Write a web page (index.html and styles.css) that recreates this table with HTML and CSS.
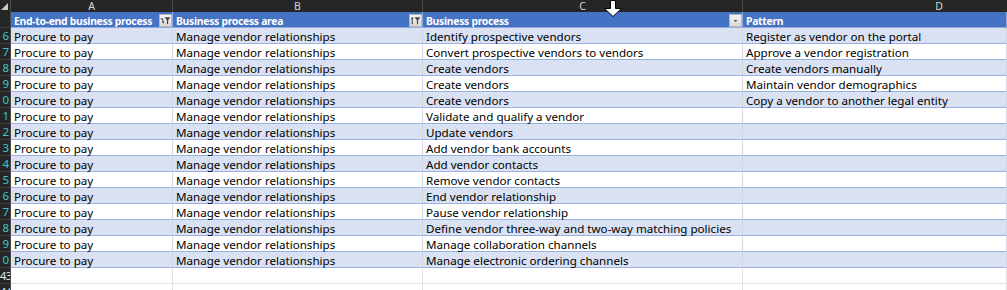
FILE: index.html
```html
<!DOCTYPE html>
<html>
<head>
<meta charset="utf-8">
<link rel="stylesheet" href="styles.css">
</head>
<body>
<div class="sheet">
  <div class="colhead corner"><span class="corner-tri"></span></div>
  <div class="colhead">A</div>
  <div class="colhead">B</div>
  <div class="colhead">C</div>
  <div class="colhead last">D</div>

  <div class="rowhead"></div>
  <div class="th"><span>End-to-end business process</span>
    <span class="fbtn"><svg viewBox="0 0 13 13" width="13" height="13"><path d="M1.8 4.6 Q4.2 4.2 4.2 8.6" fill="none" stroke="#444" stroke-width="1.1"/><path d="M3 8 L4.2 9.8 L5.4 8 Z" fill="#444"/><path d="M5.6 3.2 H11.4 L9.1 6.2 V9.8 L7.9 10.4 V6.2 Z" fill="#444"/></svg></span></div>
  <div class="th"><span>Business process area</span>
    <span class="fbtn"><svg viewBox="0 0 13 13" width="13" height="13"><path d="M3.2 10.2 V3.8" stroke="#444" stroke-width="1.1"/><path d="M1.8 5 L3.2 3 L4.6 5 Z" fill="#444"/><path d="M5.6 3.2 H11.4 L9.1 6.2 V9.8 L7.9 10.4 V6.2 Z" fill="#444"/></svg></span></div>
  <div class="th"><span>Business process</span>
    <span class="fbtn"><svg viewBox="0 0 13 13" width="13" height="13"><path d="M4.5 6 H8.5 L6.5 8 Z" fill="#555"/></svg></span></div>
  <div class="th"><span>Pattern</span></div>

  <div class="rowhead">6</div><div class="td">Procure to pay</div><div class="td">Manage vendor relationships</div><div class="td">Identify prospective vendors</div><div class="td">Register as vendor on the portal</div>
  <div class="rowhead">7</div><div class="td w">Procure to pay</div><div class="td w">Manage vendor relationships</div><div class="td w">Convert prospective vendors to vendors</div><div class="td w">Approve a vendor registration</div>
  <div class="rowhead">8</div><div class="td">Procure to pay</div><div class="td">Manage vendor relationships</div><div class="td">Create vendors</div><div class="td">Create vendors manually</div>
  <div class="rowhead">9</div><div class="td w">Procure to pay</div><div class="td w">Manage vendor relationships</div><div class="td w">Create vendors</div><div class="td w">Maintain vendor demographics</div>
  <div class="rowhead">0</div><div class="td">Procure to pay</div><div class="td">Manage vendor relationships</div><div class="td">Create vendors</div><div class="td">Copy a vendor to another legal entity</div>
  <div class="rowhead">1</div><div class="td w">Procure to pay</div><div class="td w">Manage vendor relationships</div><div class="td w">Validate and qualify a vendor</div><div class="td w"></div>
  <div class="rowhead">2</div><div class="td">Procure to pay</div><div class="td">Manage vendor relationships</div><div class="td">Update vendors</div><div class="td"></div>
  <div class="rowhead">3</div><div class="td w">Procure to pay</div><div class="td w">Manage vendor relationships</div><div class="td w">Add vendor bank accounts</div><div class="td w"></div>
  <div class="rowhead">4</div><div class="td">Procure to pay</div><div class="td">Manage vendor relationships</div><div class="td">Add vendor contacts</div><div class="td"></div>
  <div class="rowhead">5</div><div class="td w">Procure to pay</div><div class="td w">Manage vendor relationships</div><div class="td w">Remove vendor contacts</div><div class="td w"></div>
  <div class="rowhead">6</div><div class="td">Procure to pay</div><div class="td">Manage vendor relationships</div><div class="td">End vendor relationship</div><div class="td"></div>
  <div class="rowhead">7</div><div class="td w">Procure to pay</div><div class="td w">Manage vendor relationships</div><div class="td w">Pause vendor relationship</div><div class="td w"></div>
  <div class="rowhead">8</div><div class="td">Procure to pay</div><div class="td">Manage vendor relationships</div><div class="td">Define vendor three-way and two-way matching policies</div><div class="td"></div>
  <div class="rowhead">9</div><div class="td w">Procure to pay</div><div class="td w">Manage vendor relationships</div><div class="td w">Manage collaboration channels</div><div class="td w"></div>
  <div class="rowhead">0</div><div class="td">Procure to pay</div><div class="td">Manage vendor relationships</div><div class="td">Manage electronic ordering channels</div><div class="td"></div>

  <div class="rowhead plain">43</div><div class="blank"></div><div class="blank"></div><div class="blank"></div><div class="blank"></div>
  <div class="rowhead plain">44</div><div class="blank"></div><div class="blank"></div><div class="blank"></div><div class="blank"></div>
</div>
<svg class="cursor" viewBox="0 0 20 17" width="20" height="17"><path d="M7.5 0.5 H12.5 V8.5 H18.5 L10 16.5 L1.5 8.5 H7.5 Z" fill="#fff" stroke="#000" stroke-width="1"/></svg>
</body>
</html>
```
FILE: styles.css
```css
html, body {
  margin: 0;
  padding: 0;
  overflow: hidden;
  background: #ffffff;
}
body {
  font-family: "Noto Sans", "Liberation Sans", sans-serif;
  position: relative;
  width: 1007px;
  height: 290px;
}
.sheet {
  display: grid;
  grid-template-columns: 11px 162px 250px 320px 1fr;
  grid-template-rows: 12px;
  grid-auto-rows: 16px;
  width: 1007px;
}
.sheet > div {
  box-sizing: border-box;
  white-space: nowrap;
}
.colhead {
  background: #262626;
  color: #d6d6d6;
  font-size: 10.5px;
  line-height: 12px;
  text-align: center;
  border-right: 1px solid #4a4a4a;
  overflow: hidden;
}
.colhead.last {
  padding-left: 128px;
  border-right: none;
}
.corner {
  position: relative;
}
.corner-tri {
  position: absolute;
  right: 2px;
  bottom: 2px;
  width: 0;
  height: 0;
  border-left: 7px solid transparent;
  border-bottom: 7px solid #c8c8c8;
}
.rowhead {
  background: #262626;
  color: #3ec6cf;
  font-size: 11.5px;
  line-height: 16px;
  text-align: right;
  padding-right: 1px;
  border-bottom: 1px solid #3e3e3e;
  border-right: 1px solid #4a4a4a;
  overflow: hidden;
}
.rowhead.plain {
  color: #e6e6e6;
  text-align: left;
  padding: 0;
  font-size: 11px;
  letter-spacing: -0.6px;
}
.th {
  background: #4472c4;
  color: #ffffff;
  font-weight: 700;
  font-size: 10.4px;
  letter-spacing: -0.3px;
  line-height: 18px;
  padding-left: 3px;
  border-right: 1px solid #8faadc;
  border-bottom: 1px solid #8faadc;
  display: flex;
  align-items: flex-start;
  justify-content: space-between;
  overflow: hidden;
}
.fbtn {
  display: flex;
  width: 13px;
  height: 13px;
  margin-top: 2px;
  box-sizing: border-box;
  background: linear-gradient(#f4f4f4, #d9d9d9);
  border: 1px solid #b8b8b8;
  align-items: center;
  justify-content: center;
  flex: none;
}
.fbtn svg {
  display: block;
  flex: none;
}
.td {
  background: #d9e1f2;
  color: #000000;
  font-size: 11.6px;
  line-height: 17px;
  padding-left: 3px;
  border-right: 1px solid #d0d7e5;
  border-bottom: 1px solid #9bb2df;
}
.td.w {
  background: #ffffff;
}
.blank {
  background: #ffffff;
  border-right: 1px solid #e1e1e1;
  border-bottom: 1px solid #e1e1e1;
}
.cursor {
  position: absolute;
  left: 603px;
  top: 0;
}
```
